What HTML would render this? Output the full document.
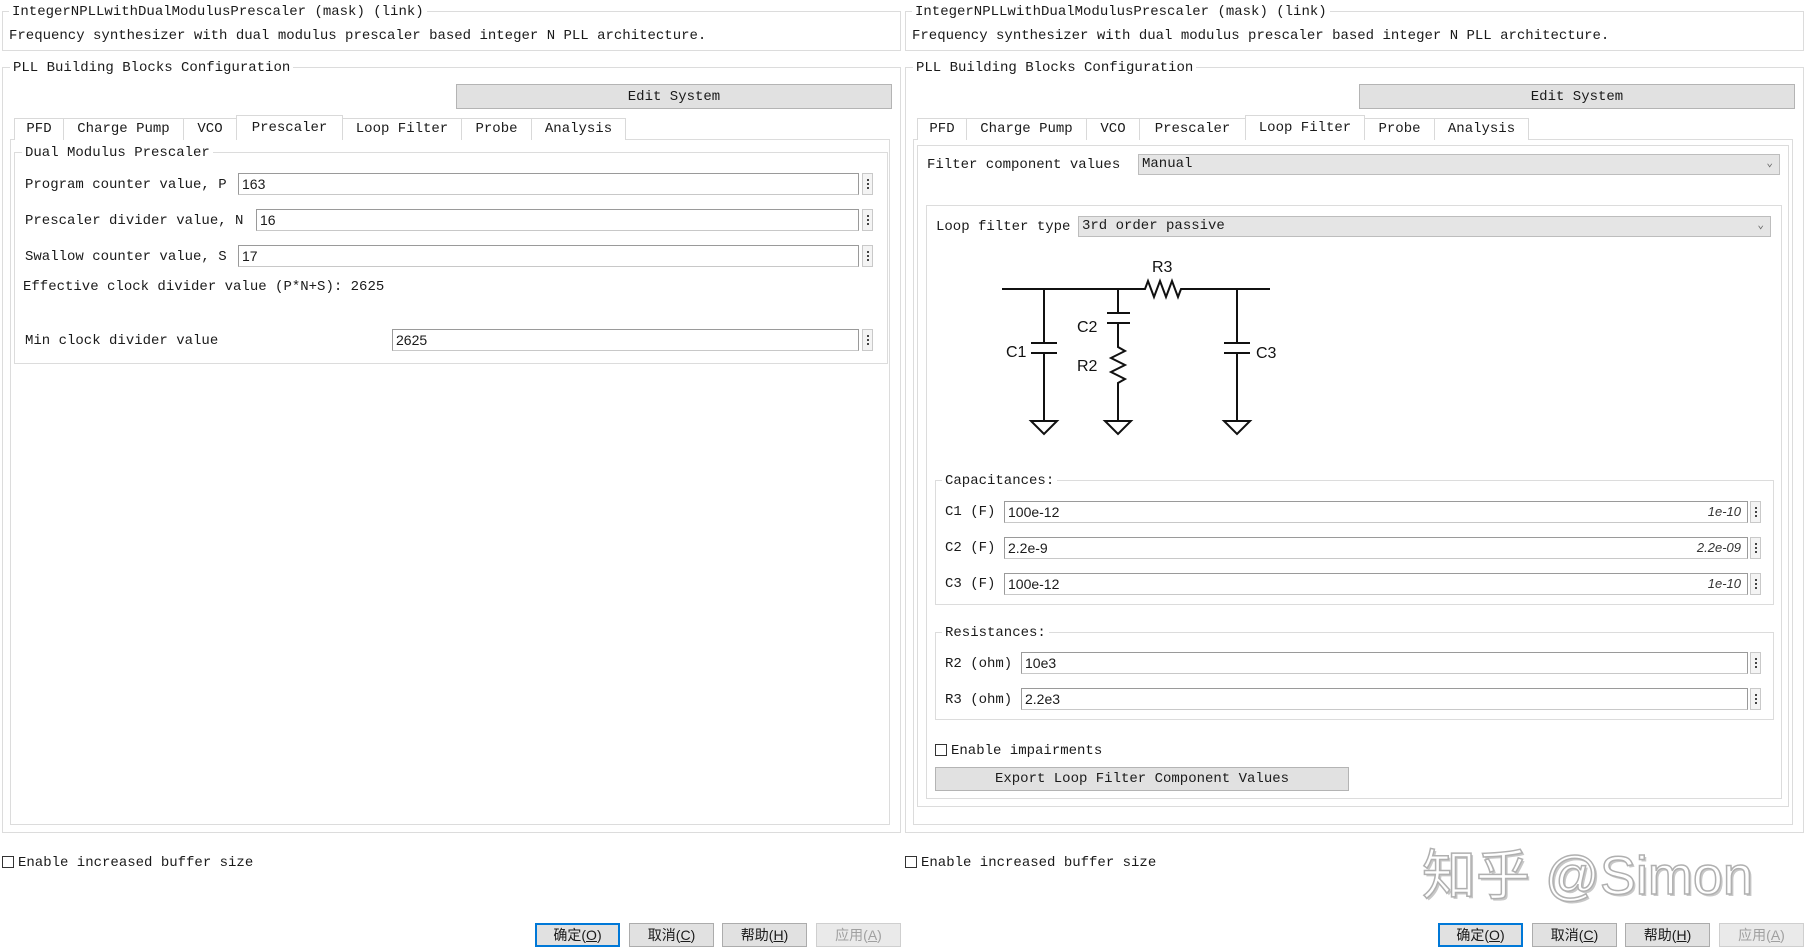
<!DOCTYPE html>
<html><head><meta charset="utf-8"><style>
*{box-sizing:border-box;margin:0;padding:0}
body{width:1806px;height:951px;background:#fff;position:relative;overflow:hidden;font-family:"Liberation Mono","Noto Sans CJK SC",monospace;font-size:14px;color:#1a1a1a}
.a{position:absolute}
.box{position:absolute;border:1px solid #dcdcdc}
.t{position:absolute;background:#fff;padding:0 3px;line-height:16px;white-space:nowrap}
.l{position:absolute;white-space:nowrap;line-height:16px}
.in{position:absolute;height:22px;border:1px solid #9a9a9a;border-bottom-color:#c8c8c8;background:#fff;font-family:"Liberation Sans",sans-serif;font-size:14px;line-height:20px;padding-left:3px}
.dots{position:absolute;width:11px;height:22px;border:1px solid #c9c9c9;background:#f4f4f4}
.dots:after{content:"";position:absolute;left:4px;top:5px;width:2px;height:2px;background:#444;box-shadow:0 4px #444,0 8px #444}
.btn{position:absolute;background:#e1e1e1;border:1px solid #b4b4b4;text-align:center;line-height:22px}
.tab{position:absolute;top:118px;height:22px;border:1px solid #d9d9d9;border-bottom:none;text-align:center;line-height:20px;background:#fff}
.tab.on{top:115px;height:25px;line-height:24px;z-index:2}
.it{position:absolute;right:6px;top:0;font-style:italic;font-size:13px;color:#333}
.cb{position:absolute;width:12px;height:12px;border:1px solid #333;background:#fff}
.db{position:absolute;width:85px;height:24px;border:1px solid #acacac;background:#e1e1e1;text-align:center;line-height:22px;font-family:"Liberation Sans","Noto Sans CJK SC",sans-serif;font-size:14px}
.db.ok{border:2px solid #0078d7;line-height:20px}
.db.dis{color:#a0a0a0;border-color:#cfcfcf;background:#eaeaea}
</style></head><body>

<!-- LEFT -->
<div class="box" style="left:2px;top:11px;width:899px;height:40px"></div>
<div class="t" style="left:9px;top:4px">IntegerNPLLwithDualModulusPrescaler (mask) (link)</div>
<div class="l" style="left:9px;top:28px">Frequency synthesizer with dual modulus prescaler based integer N PLL architecture.</div>
<div class="box" style="left:2px;top:67px;width:899px;height:766px"></div>
<div class="t" style="left:10px;top:60px">PLL Building Blocks Configuration</div>
<div class="btn" style="left:456px;top:84px;width:436px;height:25px;line-height:24px">Edit System</div>
<div class="box" style="left:10px;top:139px;width:880px;height:686px"></div>
<div class="tab" style="left:14px;width:50px">PFD</div>
<div class="tab" style="left:63px;width:121px">Charge Pump</div>
<div class="tab" style="left:183px;width:54px">VCO</div>
<div class="tab on" style="left:236px;width:107px">Prescaler</div>
<div class="tab" style="left:342px;width:120px">Loop Filter</div>
<div class="tab" style="left:461px;width:71px">Probe</div>
<div class="tab" style="left:531px;width:95px">Analysis</div>
<div class="box" style="left:14px;top:152px;width:874px;height:212px"></div>
<div class="t" style="left:22px;top:145px">Dual Modulus Prescaler</div>
<div class="l" style="left:25px;top:177px">Program counter value, P</div>
<div class="in" style="left:238px;top:173px;width:621px">163</div><div class="dots" style="left:862px;top:173px"></div>
<div class="l" style="left:25px;top:213px">Prescaler divider value, N</div>
<div class="in" style="left:256px;top:209px;width:603px">16</div><div class="dots" style="left:862px;top:209px"></div>
<div class="l" style="left:25px;top:249px">Swallow counter value, S</div>
<div class="in" style="left:238px;top:245px;width:621px">17</div><div class="dots" style="left:862px;top:245px"></div>
<div class="l" style="left:23px;top:279px">Effective clock divider value (P*N+S): 2625</div>
<div class="l" style="left:25px;top:333px">Min clock divider value</div>
<div class="in" style="left:392px;top:329px;width:467px">2625</div><div class="dots" style="left:862px;top:329px"></div>
<div class="cb" style="left:2px;top:856px"></div>
<div class="l" style="left:18px;top:855px">Enable increased buffer size</div>
<div class="db ok" style="left:535px;top:923px">确定(<u>O</u>)</div>
<div class="db" style="left:629px;top:923px">取消(<u>C</u>)</div>
<div class="db" style="left:722px;top:923px">帮助(<u>H</u>)</div>
<div class="db dis" style="left:816px;top:923px">应用(<u>A</u>)</div>

<!-- RIGHT -->
<div class="box" style="left:905px;top:11px;width:899px;height:40px"></div>
<div class="t" style="left:912px;top:4px">IntegerNPLLwithDualModulusPrescaler (mask) (link)</div>
<div class="l" style="left:912px;top:28px">Frequency synthesizer with dual modulus prescaler based integer N PLL architecture.</div>
<div class="box" style="left:905px;top:67px;width:899px;height:766px"></div>
<div class="t" style="left:913px;top:60px">PLL Building Blocks Configuration</div>
<div class="btn" style="left:1359px;top:84px;width:436px;height:25px;line-height:24px">Edit System</div>
<div class="box" style="left:913px;top:139px;width:880px;height:686px"></div>
<div class="tab" style="left:917px;width:50px">PFD</div>
<div class="tab" style="left:966px;width:121px">Charge Pump</div>
<div class="tab" style="left:1086px;width:54px">VCO</div>
<div class="tab" style="left:1139px;width:107px">Prescaler</div>
<div class="tab on" style="left:1245px;width:120px">Loop Filter</div>
<div class="tab" style="left:1364px;width:71px">Probe</div>
<div class="tab" style="left:1434px;width:95px">Analysis</div>
<div class="box" style="left:917px;top:145px;width:872px;height:662px"></div>
<div class="l" style="left:927px;top:157px">Filter component values</div>
<div class="in" style="left:1138px;top:154px;width:642px;height:21px;background:#e5e5e5;border-color:#bdbdbd;font-family:'Liberation Mono',monospace;line-height:19px">Manual<span class="a" style="right:6px;top:0;color:#666;font-size:11px">&#8964;</span></div>
<div class="box" style="left:926px;top:205px;width:856px;height:594px"></div>
<div class="l" style="left:936px;top:219px">Loop filter type</div>
<div class="in" style="left:1078px;top:216px;width:693px;height:21px;background:#e5e5e5;border-color:#bdbdbd;font-family:'Liberation Mono',monospace;line-height:19px">3rd  order passive<span class="a" style="right:6px;top:0;color:#666;font-size:11px">&#8964;</span></div>

<svg class="a" style="left:0;top:0" width="1806" height="951">
<g stroke="#111" stroke-width="2" fill="none">
<path d="M1002 289H1145l3-8 6 16 6-16 6 16 6-16 6 16 3-8H1270"/>
<path d="M1044 289V343M1031 343H1057M1031 353H1057M1044 353V421"/>
<path d="M1118 289V313M1107 313H1130M1107 323H1130M1118 323V347l7 4-14 7 14 7-14 7 14 7-7 4V421"/>
<path d="M1237 289V343M1224 343H1250M1224 353H1250M1237 353V421"/>
<path d="M1031 421H1057L1044 434Z"/>
<path d="M1105 421H1131L1118 434Z"/>
<path d="M1224 421H1250L1237 434Z"/>
</g>
<g font-family="Liberation Sans,sans-serif" font-size="16" fill="#111">
<text x="1152" y="272">R3</text>
<text x="1006" y="357">C1</text>
<text x="1077" y="332">C2</text>
<text x="1077" y="371">R2</text>
<text x="1256" y="358">C3</text>
</g>
</svg>

<div class="box" style="left:935px;top:480px;width:839px;height:125px"></div>
<div class="t" style="left:942px;top:473px">Capacitances:</div>
<div class="l" style="left:945px;top:504px">C1 (F)</div>
<div class="in" style="left:1004px;top:501px;width:744px">100e-12<span class="it">1e-10</span></div><div class="dots" style="left:1750px;top:501px"></div>
<div class="l" style="left:945px;top:540px">C2 (F)</div>
<div class="in" style="left:1004px;top:537px;width:744px">2.2e-9<span class="it">2.2e-09</span></div><div class="dots" style="left:1750px;top:537px"></div>
<div class="l" style="left:945px;top:576px">C3 (F)</div>
<div class="in" style="left:1004px;top:573px;width:744px">100e-12<span class="it">1e-10</span></div><div class="dots" style="left:1750px;top:573px"></div>

<div class="box" style="left:935px;top:632px;width:839px;height:88px"></div>
<div class="t" style="left:942px;top:625px">Resistances:</div>
<div class="l" style="left:945px;top:656px">R2 (ohm)</div>
<div class="in" style="left:1021px;top:652px;width:727px">10e3</div><div class="dots" style="left:1750px;top:652px"></div>
<div class="l" style="left:945px;top:692px">R3 (ohm)</div>
<div class="in" style="left:1021px;top:688px;width:727px">2.2e3</div><div class="dots" style="left:1750px;top:688px"></div>

<div class="cb" style="left:935px;top:744px"></div>
<div class="l" style="left:951px;top:743px">Enable impairments</div>
<div class="btn" style="left:935px;top:767px;width:414px;height:24px">Export Loop Filter Component Values</div>

<div class="cb" style="left:905px;top:856px"></div>
<div class="l" style="left:921px;top:855px">Enable increased buffer size</div>
<div class="a" style="left:1422px;top:846px;font-family:'Liberation Sans','Noto Sans CJK SC',sans-serif;font-size:54px;line-height:60px;color:#fff;-webkit-text-stroke:1.5px #b0b0b0;text-shadow:2px 2px 0 #c8c8c8;white-space:nowrap">知乎 @Simon</div>
<div class="db ok" style="left:1438px;top:923px">确定(<u>O</u>)</div>
<div class="db" style="left:1532px;top:923px">取消(<u>C</u>)</div>
<div class="db" style="left:1625px;top:923px">帮助(<u>H</u>)</div>
<div class="db dis" style="left:1719px;top:923px">应用(<u>A</u>)</div>
</body></html>
